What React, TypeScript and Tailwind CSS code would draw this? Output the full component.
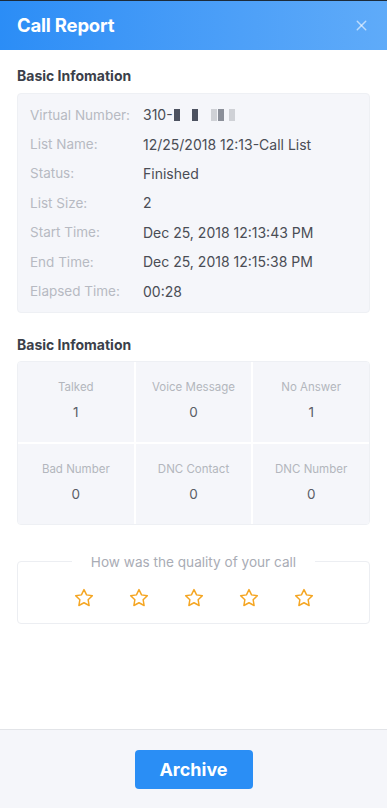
import { X } from 'lucide-react'

const info = [
  { label: 'Virtual Number:', value: 'redacted' },
  { label: 'List Name:', value: '12/25/2018 12:13-Call List' },
  { label: 'Status:', value: 'Finished' },
  { label: 'List Size:', value: '2' },
  { label: 'Start Time:', value: 'Dec 25, 2018 12:13:43 PM' },
  { label: 'End Time:', value: 'Dec 25, 2018 12:15:38 PM' },
  { label: 'Elapsed Time:', value: '00:28' },
]

const stats = [
  { label: 'Talked', value: 1 },
  { label: 'Voice Message', value: 0 },
  { label: 'No Answer', value: 1 },
  { label: 'Bad Number', value: 0 },
  { label: 'DNC Contact', value: 0 },
  { label: 'DNC Number', value: 0 },
]

function Star() {
  return (
    <svg width="22" height="22" viewBox="0 0 24 24" fill="none" stroke="#f5a623" strokeWidth={1.6} strokeLinejoin="round">
      <path d="M12 2.8l2.8 5.8 6.3.9-4.6 4.4 1.1 6.3L12 17.2l-5.6 3 1.1-6.3-4.6-4.4 6.3-.9z" />
    </svg>
  )
}

export default function App() {
  return (
    <div className="w-[387px] h-[808px] flex flex-col bg-white font-['Inter','Liberation_Sans',sans-serif] border-t border-[#1c2b3a]">
      <div className="h-[49px] shrink-0 flex items-center justify-between px-[17px] bg-gradient-to-r from-[#2b8df6] to-[#5fabf9]">
        <h1 className="text-white text-[18.5px] font-bold tracking-[-0.2px]">Call Report</h1>
        <X className="w-[17px] h-[17px] text-white/60" strokeWidth={2} />
      </div>

      <div className="flex-1 px-[17px]">
        <h2 className="mt-[16px] leading-[20px] text-[14px] font-bold text-[#3b3f4a]">Basic Infomation</h2>
        <div className="mt-[7px] bg-[#f5f6fa] border border-[#eef0f4] rounded py-[6px] px-[12px]">
          {info.map((r) => (
            <div key={r.label} className="flex items-center h-[29.4px]">
              <span className="w-[113px] text-[13.5px] text-[#b7bac2]">{r.label}</span>
              {r.value === 'redacted' ? (
                <span className="flex items-center text-[14px] text-[#4a4d55]">
                  310-
                  <span className="ml-px w-[6px] h-[12px] bg-[#4d5260]" />
                  <span className="ml-[12px] w-[6px] h-[12px] bg-[#4d5260]" />
                  <span className="ml-[13px] w-[6px] h-[12px] bg-[#cfd1d6]" />
                  <span className="ml-[1px] w-[6px] h-[12px] bg-[#8b8f99]" />
                  <span className="ml-[5px] w-[6px] h-[12px] bg-[#cfd1d6]" />
                </span>
              ) : (
                <span className="text-[14px] text-[#4a4d55]">{r.value}</span>
              )}
            </div>
          ))}
        </div>

        <h2 className="mt-[22px] leading-[20px] text-[14px] font-bold text-[#3b3f4a]">Basic Infomation</h2>
        <div className="mt-[6px] border border-[#eef0f4] rounded overflow-hidden bg-white">
          <div className="grid grid-cols-3 gap-[2px]">
            {stats.map((s) => (
              <div key={s.label} className="h-[80px] bg-[#f5f6fa] flex flex-col items-center pt-[17px]">
                <span className="text-[11.5px] text-[#b3b6bd]">{s.label}</span>
                <span className="mt-[6px] text-[13.5px] text-[#5a5d66]">{s.value}</span>
              </div>
            ))}
          </div>
        </div>

        <fieldset className="mt-[27px] border border-[#eceef2] rounded h-[72px] flex">
          <legend className="mx-auto px-[19px] text-[13.6px] text-[#a9acb5]">How was the quality of your call</legend>
          <div className="flex w-full justify-center gap-[33px] mt-[15px]">
            {[0, 1, 2, 3, 4].map((i) => (
              <Star key={i} />
            ))}
          </div>
        </fieldset>
      </div>

      <div className="h-[79px] shrink-0 bg-[#f5f6fa] border-t border-[#e2e4e8] flex justify-center pt-[20px]">
        <button className="w-[118px] h-[39px] rounded bg-[#2a8ef5] text-white text-[18px] font-bold">Archive</button>
      </div>
    </div>
  )
}
